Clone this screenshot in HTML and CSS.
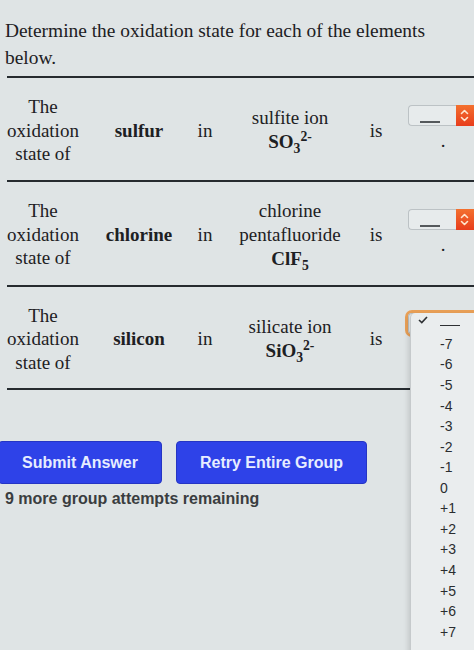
FILE: index.html
```html
<!DOCTYPE html>
<html lang="en">

<head>
  <title>Oxidation States</title>

  <link rel="stylesheet" href="styles.css">
</head>

<body>

  <div class="page">
    <p class="prompt">Determine the oxidation state for each of the elements below.</p>

    <div class="rows">
      <div class="row">
        <div class="cell lead">The<br>oxidation<br>state of</div>
        <div class="cell element">sulfur</div>
        <div class="cell">in</div>
        <div class="cell compound">sulfite ion<br><span class="formula">SO<sub>3</sub><sup>2-</sup></span></div>
        <div class="cell">is</div>
        <div class="answer">
          <div class="picker">
            <span class="picker-box"><span class="blank"></span></span>
            <span class="picker-tab">
              <svg width="14" height="21" viewBox="0 0 14 21">
                <polyline points="4.5,8.5 7.5,5.5 10.5,8.5" />
                <polyline points="4.5,12.5 7.5,15.5 10.5,12.5" />
              </svg>
            </span>
          </div>
          <div class="period">.</div>
        </div>
      </div>

      <div class="row">
        <div class="cell lead">The<br>oxidation<br>state of</div>
        <div class="cell element">chlorine</div>
        <div class="cell">in</div>
        <div class="cell compound">chlorine<br>pentafluoride<br><span class="formula">ClF<sub>5</sub></span></div>
        <div class="cell">is</div>
        <div class="answer">
          <div class="picker">
            <span class="picker-box"><span class="blank"></span></span>
            <span class="picker-tab">
              <svg width="14" height="21" viewBox="0 0 14 21">
                <polyline points="4.5,8.5 7.5,5.5 10.5,8.5" />
                <polyline points="4.5,12.5 7.5,15.5 10.5,12.5" />
              </svg>
            </span>
          </div>
          <div class="period">.</div>
        </div>
      </div>

      <div class="row">
        <div class="cell lead">The<br>oxidation<br>state of</div>
        <div class="cell element">silicon</div>
        <div class="cell">in</div>
        <div class="cell compound">silicate ion<br><span class="formula">SiO<sub>3</sub><sup>2-</sup></span></div>
        <div class="cell">is</div>
        <div class="answer">
          <div class="picker open">
            <span class="picker-box"><span class="blank"></span></span>
            <span class="picker-tab"></span>

            <ul class="menu">
              <li class="selected">
                <svg class="check" width="10" height="8" viewBox="0 0 10 8">
                  <polyline points="1,4 3.8,6.6 9,1" />
                </svg>
                <span class="blank"></span>
              </li>
              <li>-7</li>
              <li>-6</li>
              <li>-5</li>
              <li>-4</li>
              <li>-3</li>
              <li>-2</li>
              <li>-1</li>
              <li>0</li>
              <li>+1</li>
              <li>+2</li>
              <li>+3</li>
              <li>+4</li>
              <li>+5</li>
              <li>+6</li>
              <li>+7</li>
            </ul>
          </div>
          <div class="period">&nbsp;</div>
        </div>
      </div>
    </div>

    <div class="actions">
      <button class="btn">Submit Answer</button>
      <button class="btn">Retry Entire Group</button>
    </div>

    <p class="attempts">9 more group attempts remaining</p>
  </div>

</body>

</html>
```

FILE: styles.css
```css
html,
body {
  overflow: hidden;
}

body {
  height: 100vh;
  margin: 0;
  color: #1d2023;
  background-color: #dfe4e5;
  font-family: "Liberation Serif", "Times New Roman", serif;
}

.page {
  padding-left: 7px;
}

.prompt {
  margin: 0 0 5px -2px;
  padding-top: 17px;
  font-size: 19.4px;
  line-height: 27px;
}

.rows {
  border-top: 2px solid #262b2f;
}

.row {
  display: grid;
  grid-template-columns: 72px 120px 12px 158px 14px 95px;
  align-items: center;
  padding: 17px 0 14px;
  border-bottom: 2px solid #262b2f;
  font-size: 19px;
  line-height: 23.5px;
}

.cell {
  display: flex;
  justify-content: center;
  text-align: center;
  white-space: nowrap;
}

.cell.lead,
.cell.compound {
  display: block;
}

.compound {
  line-height: 24px;
}

.element,
.formula {
  font-weight: bold;
}

sub,
sup {
  font-size: 0.72em;
  line-height: 0;
}

.answer {
  margin-left: 25px;
  width: 70px;
}

.picker {
  position: relative;
  display: flex;
  height: 21px;
}

.picker-box {
  box-sizing: border-box;
  width: 48px;
  border: 1px solid #bcc2c5;
  border-right: none;
  border-radius: 4px 0 0 4px;
  background-color: #e7ebec;
}

.picker-box .blank {
  display: block;
  width: 20px;
  margin: 15px 0 0 11px;
  border-bottom: 2px solid #55595c;
}

.picker-tab {
  width: 22px;
  border-radius: 0 4px 4px 0;
  background: linear-gradient(#f3702e, #e83d1c);
}

.picker-tab svg {
  display: block;
  margin-left: 1px;
}

.picker-tab polyline {
  fill: none;
  stroke: #ffe6cf;
  stroke-width: 1.6;
  stroke-linecap: round;
  stroke-linejoin: round;
}

.picker.open {
  border-radius: 4px;
  box-shadow: 0 0 0 3px #e9a057;
}

.period {
  line-height: 30px;
  text-align: center;
}

.menu {
  position: absolute;
  top: 0;
  left: 2px;
  z-index: 2;
  width: 70px;
  height: 345px;
  margin: 0;
  padding: 0;
  list-style: none;
  border-left: 1px solid #c6cacc;
  border-top-left-radius: 5px;
  background-color: #eaedee;
  box-shadow: -2px 2px 5px rgba(0, 0, 0, 0.12);
  font-family: "Liberation Sans", Arial, sans-serif;
  font-size: 14px;
  color: #2a2d30;
}

.menu li {
  position: relative;
  height: 20.57px;
  line-height: 20.57px;
  padding-left: 29px;
}

.menu .check {
  position: absolute;
  left: 7px;
  top: 3px;
}

.menu .check polyline {
  fill: none;
  stroke: #2d3033;
  stroke-width: 1.6;
}

.menu li .blank {
  display: inline-block;
  width: 20px;
  margin-top: 12px;
  vertical-align: top;
  border-bottom: 1.5px solid #2d3033;
}

.actions {
  display: flex;
  gap: 14px;
  margin: 51px 0 0 -9px;
}

.btn {
  height: 43px;
  border: 1px solid #2535c4;
  border-radius: 4px;
  background-color: #2e42e8;
  color: #e6edff;
  font-family: "Liberation Sans", Arial, sans-serif;
  font-size: 16px;
  font-weight: bold;
  cursor: pointer;
}

.btn:first-child {
  width: 164px;
}

.btn:last-child {
  width: 191px;
}

.attempts {
  margin: 6px 0 0 -2px;
  font-family: "Liberation Sans", Arial, sans-serif;
  font-size: 16px;
  font-weight: bold;
  line-height: 18px;
  color: #3a3d40;
}
```
